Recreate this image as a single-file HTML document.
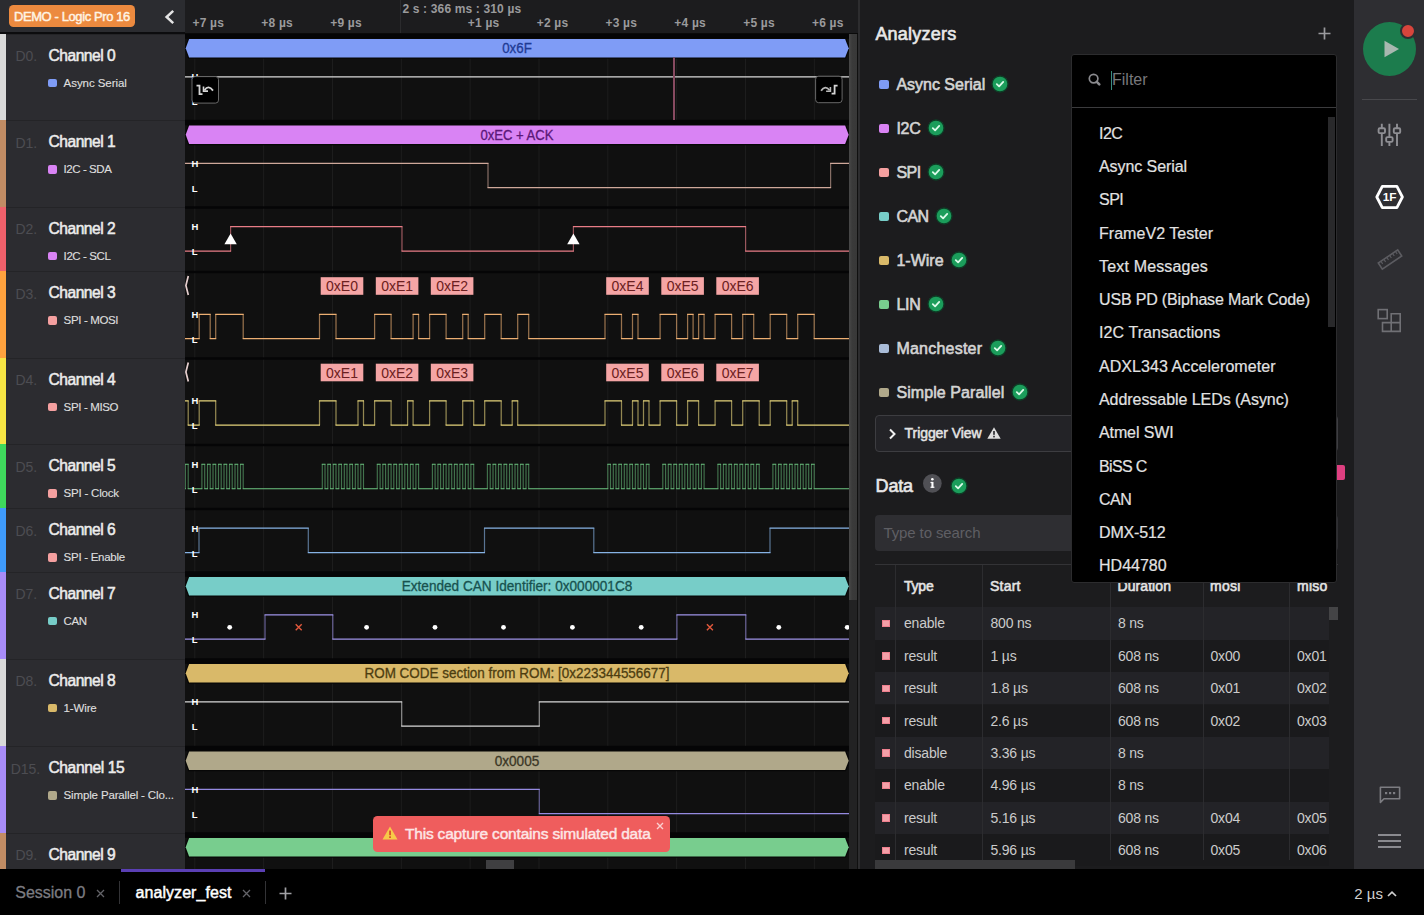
<!DOCTYPE html>
<html><head><meta charset="utf-8"><title>Logic 2</title>
<style>
*{box-sizing:border-box;margin:0;padding:0}
html,body{width:1424px;height:915px;overflow:hidden;background:#000}
body{position:relative;font-family:"Liberation Sans", sans-serif;color:#e0e0e0}
i{display:block;font-style:normal}
#wave{position:absolute;left:185px;top:0;width:675px;height:869px;background:#101010}
#ruler{position:absolute;left:185px;top:0;width:675px;height:32.5px;background:#1c1c1e}
#rline{position:absolute;left:185px;top:32.5px;width:675px;height:2px;background:#0a0a0a}
.rl{position:absolute;top:15.5px;font-size:12px;font-weight:bold;color:#9a9a9c;white-space:nowrap;line-height:15px}
#major{position:absolute;left:399.8px;top:0;width:1px;height:33px;background:#2b2b2d}
#mlabel{position:absolute;left:402.5px;top:0.5px;font-size:12px;font-weight:bold;color:#9a9a9c;white-space:nowrap;line-height:16px}
#vsb{position:absolute;left:848.8px;top:34px;width:8.3px;height:835px;background:#222223}
#vsbt{position:absolute;left:848.8px;top:34px;width:8.3px;height:566px;background:linear-gradient(90deg,#484848,#3a3a3a 40%,#383838)}
#vsb2{position:absolute;left:857.1px;top:34px;width:1px;height:835px;background:#101010}
#left{position:absolute;left:0;top:0;width:185px;height:869px;background:#2c2c30}
#topbar{position:absolute;left:0;top:0;width:185px;height:32.5px;background:#2b2c30}
#topline{position:absolute;left:0;top:32.3px;width:185px;height:1.7px;background:#0c0c0e}
#demo{position:absolute;left:8.7px;top:4.9px;width:126.4px;height:22.5px;border-radius:4.5px;background:#ec8a3f;color:#fff4e4;font-size:13px;line-height:23.5px;text-align:center;white-space:nowrap;-webkit-text-stroke:0.45px}
.ch{position:absolute;left:0;width:185px;margin-top:-0.5px;border-top:1px solid #242427}
.strip{position:absolute;left:0;top:-1px;bottom:0;width:5.8px}
.dn{position:absolute;top:12.6px;font-size:14px;color:#4d4d52;line-height:18px;letter-spacing:0.3px}
.cn{position:absolute;left:48.5px;top:12.4px;font-size:15.6px;-webkit-text-stroke:0.5px;color:#ececec;line-height:18px;white-space:nowrap}
.sq{position:absolute;left:48.2px;top:44.4px;width:8.8px;height:8.4px;border-radius:2px}
.sub{position:absolute;left:63.6px;top:40.2px;font-size:11.5px;-webkit-text-stroke:0.15px;color:#dedede;line-height:16px;white-space:nowrap}
#rp{position:absolute;left:858.1px;top:0;width:495.9px;height:869px;background:#1c1c1e;border-left:2.2px solid #2d2d2f}
#side{position:absolute;left:1354px;top:0;width:70px;height:869px;background:#2e2e32}
h2{position:absolute;font-size:18px;font-weight:normal;-webkit-text-stroke:0.6px;color:#e8e8e8;line-height:22px;white-space:nowrap}
.an{position:absolute;left:879px;height:24px;white-space:nowrap}
.asq{position:absolute;left:0;top:7.7px;width:9.5px;height:9px;border-radius:2px}
.at{position:absolute;left:17.4px;top:0;font-size:16px;-webkit-text-stroke:0.6px;color:#d4d4d4;line-height:24px}
.an .ck{position:relative;top:3.6px}
.an .at{position:relative;left:0;margin-left:17.4px;margin-right:7.8px;display:inline-block;vertical-align:top}
#trig{position:absolute;left:875.4px;top:414.9px;width:463px;height:36.7px;border:1px solid #3d3d41;border-radius:4px;background:#232327}
#dsearch{position:absolute;left:875.4px;top:514.6px;width:463px;height:36.3px;border-radius:4px;background:#2e2e32;color:#5f5f64;font-size:15px;line-height:36px;padding-left:8px}
#dd{position:absolute;left:1070.5px;top:53.7px;width:266.3px;height:529.5px;background:#000;border:1px solid #2c2c2e;border-radius:3px;overflow:hidden}
#ddsep{position:absolute;left:0;top:52.5px;width:100%;height:1.3px;background:#3b3b3d}
.di{position:absolute;left:27.5px;font-size:16px;-webkit-text-stroke:0.2px;color:#e2e2e2;line-height:24px;white-space:nowrap}
#ddsb{position:absolute;left:256.5px;top:62.5px;width:7px;height:210px;background:#29292b}
#tbl{position:absolute;left:875px;top:564.5px;width:463px;height:304.5px;overflow:hidden}
.tr{position:absolute;left:875px;width:454px;height:32.4px;font-size:14px;letter-spacing:-0.2px;color:#cbcbcb;line-height:32.4px;white-space:nowrap}
.tr span{position:absolute;top:0}
.mk{position:absolute;left:7px;top:12.6px;width:7.8px;height:7.4px;background:#f4a0a8;border:1.6px solid #ee7f8e}
.th{position:absolute;top:577px;font-size:14px;-webkit-text-stroke:0.55px;color:#e4e4e4;line-height:18px}
.vl{position:absolute;top:565px;width:1px;height:295px;background:#2c2c2f}
#bottom{position:absolute;left:0;top:869px;width:1424px;height:46px;background:#000}
.tab{position:absolute;top:14px;font-size:16px;line-height:20px;white-space:nowrap}
</style></head><body>
<div id="wave"></div>
<div id="ruler"></div><div id="rline"></div>
<div id="major"></div><span id="mlabel" style="letter-spacing:0.149px">2 s : 366 ms : 310 µs</span>
<span class="rl" id="rl0" style="left:192.5px;letter-spacing:0.198px">+7 µs</span>
<span class="rl" id="rl1" style="left:261.3px;letter-spacing:0.198px">+8 µs</span>
<span class="rl" id="rl2" style="left:330.2px;letter-spacing:0.198px">+9 µs</span>
<span class="rl" id="rl3" style="left:467.8px;letter-spacing:0.198px">+1 µs</span>
<span class="rl" id="rl4" style="left:536.7px;letter-spacing:0.198px">+2 µs</span>
<span class="rl" id="rl5" style="left:605.5px;letter-spacing:0.198px">+3 µs</span>
<span class="rl" id="rl6" style="left:674.3px;letter-spacing:0.198px">+4 µs</span>
<span class="rl" id="rl7" style="left:743.2px;letter-spacing:0.198px">+5 µs</span>
<span class="rl" id="rl8" style="left:812.0px;letter-spacing:0.198px">+6 µs</span>
<svg style="position:absolute;left:0;top:0" width="1424" height="869" viewBox="0 0 1424 869" font-family='"Liberation Sans", sans-serif'><defs><clipPath id="wc"><rect x="185" y="34" width="664" height="835"/></clipPath></defs><g clip-path="url(#wc)"><rect x="194.3" y="34" width="1" height="835" fill="#1d1d1d"/>
<rect x="263.1" y="34" width="1" height="835" fill="#1d1d1d"/>
<rect x="332.0" y="34" width="1" height="835" fill="#1d1d1d"/>
<rect x="400.8" y="34" width="1" height="835" fill="#1d1d1d"/>
<rect x="469.6" y="34" width="1" height="835" fill="#1d1d1d"/>
<rect x="538.5" y="34" width="1" height="835" fill="#1d1d1d"/>
<rect x="607.3" y="34" width="1" height="835" fill="#1d1d1d"/>
<rect x="676.1" y="34" width="1" height="835" fill="#1d1d1d"/>
<rect x="745.0" y="34" width="1" height="835" fill="#1d1d1d"/>
<rect x="813.8" y="34" width="1" height="835" fill="#1d1d1d"/>
<rect x="185" y="33.3" width="664" height="5.5" fill="#050506"/>
<rect x="185" y="119.8" width="664" height="5.5" fill="#050506"/>
<rect x="185" y="206.3" width="664" height="2.4" fill="#050506"/>
<rect x="185" y="270.8" width="664" height="2.4" fill="#050506"/>
<rect x="185" y="357.3" width="664" height="2.4" fill="#050506"/>
<rect x="185" y="443.8" width="664" height="2.4" fill="#050506"/>
<rect x="185" y="507.8" width="664" height="2.4" fill="#050506"/>
<rect x="185" y="571.3" width="664" height="5.5" fill="#050506"/>
<rect x="185" y="658.3" width="664" height="5.5" fill="#050506"/>
<rect x="185" y="745.8" width="664" height="5.5" fill="#050506"/>
<rect x="185" y="832.3" width="664" height="5.5" fill="#050506"/>
<polygon points="185.7,48.25 189.1,39.0 845.1,39.0 848.7,48.25 845.1,57.5 189.1,57.5" fill="#7f9cf6" stroke="#070707" stroke-width="2.4" paint-order="stroke"/><text x="502.2" y="53.1" textLength="29.6" lengthAdjust="spacingAndGlyphs" font-size="14" fill="#1e3a94" stroke="#1e3a94" stroke-width="0.3">0x6F</text>
<polygon points="185.7,134.75 189.1,125.5 845.1,125.5 848.7,134.75 845.1,144.0 189.1,144.0" fill="#d983f4" stroke="#070707" stroke-width="2.4" paint-order="stroke"/><text x="480.4" y="139.7" textLength="73.1" lengthAdjust="spacingAndGlyphs" font-size="14" fill="#5b1878" stroke="#5b1878" stroke-width="0.3">0xEC + ACK</text>
<polygon points="185.7,586.25 189.1,577.0 845.1,577.0 848.7,586.25 845.1,595.5 189.1,595.5" fill="#77cdc8" stroke="#070707" stroke-width="2.4" paint-order="stroke"/><text x="401.7" y="591.1" textLength="230.6" lengthAdjust="spacingAndGlyphs" font-size="14" fill="#17524f" stroke="#17524f" stroke-width="0.3">Extended CAN Identifier: 0x000001C8</text>
<polygon points="185.7,673.25 189.1,664.0 845.1,664.0 848.7,673.25 845.1,682.5 189.1,682.5" fill="#d9b969" stroke="#070707" stroke-width="2.4" paint-order="stroke"/><text x="364.5" y="678.1" textLength="305" lengthAdjust="spacingAndGlyphs" font-size="14" fill="#4d3d10" stroke="#4d3d10" stroke-width="0.3">ROM CODE section from ROM: [0x223344556677]</text>
<polygon points="185.7,760.75 189.1,751.5 845.1,751.5 848.7,760.75 845.1,770.0 189.1,770.0" fill="#b0a88a" stroke="#070707" stroke-width="2.4" paint-order="stroke"/><text x="494.7" y="765.6" textLength="44.6" lengthAdjust="spacingAndGlyphs" font-size="14" fill="#3b3726" stroke="#3b3726" stroke-width="0.3">0x0005</text>
<polygon points="185.7,847.25 189.1,838.0 845.1,838.0 848.7,847.25 845.1,856.5 189.1,856.5" fill="#78cd8e" stroke="#070707" stroke-width="2.4" paint-order="stroke"/>
<path d="M185 76.8H849" fill="none" stroke="#dadada" stroke-width="1.2"/>
<rect x="673" y="57.5" width="2" height="62.5" fill="#874a60"/>
<path d="M184.5 163.3H488.5M487.5 187.7H831.1M830.1 163.3H849.0" fill="none" stroke="#cfa89a" stroke-width="1.2"/><path d="M488.0 163.3V187.7M830.6 163.3V187.7" fill="none" stroke="#cfa89a" stroke-width="1.2" opacity="0.62"/>
<path d="M184.5 251.2H231.1M230.1 226.7H402.5M401.5 251.2H573.9M572.9 226.7H746.1M745.1 251.2H849.0" fill="none" stroke="#e87c86" stroke-width="1.2"/><path d="M230.6 226.7V251.2M402.0 226.7V251.2M573.4 226.7V251.2M745.6 226.7V251.2" fill="none" stroke="#e87c86" stroke-width="1.2" opacity="0.62"/>
<polygon points="230.6,233.5 224.4,244.3 236.79999999999998,244.3" fill="#fff"/>
<polygon points="573.4,233.5 567.1999999999999,244.3 579.6,244.3" fill="#fff"/>
<path d="M184.5 338.7H199.7M198.7 314.3H210.7M209.7 338.7H216.2M215.2 314.3H243.7M242.7 338.7H320.0M319.0 314.3H336.5M335.5 338.7H375.1M374.1 314.3H391.6M390.6 338.7H413.6M412.6 314.3H419.1M418.1 338.7H430.1M429.1 314.3H446.6M445.6 338.7H463.2M462.2 314.3H468.7M467.7 338.7H485.2M484.2 314.3H501.7M500.7 338.7H518.2M517.2 314.3H529.2M528.2 338.7H605.5M604.5 314.3H622.0M621.0 338.7H633.0M632.0 314.3H638.5M637.5 338.7H660.6M659.6 314.3H677.1M676.1 338.7H688.1M687.1 314.3H693.6M692.6 338.7H699.1M698.1 314.3H704.6M703.6 338.7H715.6M714.6 314.3H732.1M731.1 338.7H743.2M742.2 314.3H754.2M753.2 338.7H770.7M769.7 314.3H787.2M786.2 338.7H798.2M797.2 314.3H814.7M813.7 338.7H849.0" fill="none" stroke="#ecae72" stroke-width="1.25"/><path d="M199.2 314.3V338.7M210.2 314.3V338.7M215.7 314.3V338.7M243.2 314.3V338.7M319.5 314.3V338.7M336.0 314.3V338.7M374.6 314.3V338.7M391.1 314.3V338.7M413.1 314.3V338.7M418.6 314.3V338.7M429.6 314.3V338.7M446.1 314.3V338.7M462.7 314.3V338.7M468.2 314.3V338.7M484.7 314.3V338.7M501.2 314.3V338.7M517.7 314.3V338.7M528.7 314.3V338.7M605.0 314.3V338.7M621.5 314.3V338.7M632.5 314.3V338.7M638.0 314.3V338.7M660.1 314.3V338.7M676.6 314.3V338.7M687.6 314.3V338.7M693.1 314.3V338.7M698.6 314.3V338.7M704.1 314.3V338.7M715.1 314.3V338.7M731.6 314.3V338.7M742.7 314.3V338.7M753.7 314.3V338.7M770.2 314.3V338.7M786.7 314.3V338.7M797.7 314.3V338.7M814.2 314.3V338.7" fill="none" stroke="#ecae72" stroke-width="1.25" opacity="0.62"/>
<path d="M184.5 400.8H188.7M187.7 425.2H199.7M198.7 400.8H216.2M215.2 425.2H320.0M319.0 400.8H336.5M335.5 425.2H358.5M357.5 400.8H364.0M363.0 425.2H375.1M374.1 400.8H391.6M390.6 425.2H408.1M407.1 400.8H413.6M412.6 425.2H430.1M429.1 400.8H446.6M445.6 425.2H463.2M462.2 400.8H474.2M473.2 425.2H485.2M484.2 400.8H501.7M500.7 425.2H512.7M511.7 400.8H518.2M517.2 425.2H605.5M604.5 400.8H622.0M621.0 425.2H633.0M632.0 400.8H638.5M637.5 425.2H644.0M643.0 400.8H649.5M648.5 425.2H660.6M659.6 400.8H677.1M676.1 425.2H688.1M687.1 400.8H699.1M698.1 425.2H715.6M714.6 400.8H732.1M731.1 425.2H743.2M742.2 400.8H759.7M758.7 425.2H770.7M769.7 400.8H787.2M786.2 425.2H792.7M791.7 400.8H798.2M797.2 425.2H849.0" fill="none" stroke="#e4d27a" stroke-width="1.25"/><path d="M188.2 400.8V425.2M199.2 400.8V425.2M215.7 400.8V425.2M319.5 400.8V425.2M336.0 400.8V425.2M358.0 400.8V425.2M363.5 400.8V425.2M374.6 400.8V425.2M391.1 400.8V425.2M407.6 400.8V425.2M413.1 400.8V425.2M429.6 400.8V425.2M446.1 400.8V425.2M462.7 400.8V425.2M473.7 400.8V425.2M484.7 400.8V425.2M501.2 400.8V425.2M512.2 400.8V425.2M517.7 400.8V425.2M605.0 400.8V425.2M621.5 400.8V425.2M632.5 400.8V425.2M638.0 400.8V425.2M643.5 400.8V425.2M649.0 400.8V425.2M660.1 400.8V425.2M676.6 400.8V425.2M687.6 400.8V425.2M698.6 400.8V425.2M715.1 400.8V425.2M731.6 400.8V425.2M742.7 400.8V425.2M759.2 400.8V425.2M770.2 400.8V425.2M786.7 400.8V425.2M792.2 400.8V425.2M797.7 400.8V425.2" fill="none" stroke="#e4d27a" stroke-width="1.25" opacity="0.62"/>
<path d="M184.5 488.7H185.9M184.9 464.2H188.7M187.7 488.7H202.4M201.4 464.2H205.2M204.2 488.7H208.0M207.0 464.2H210.7M209.7 488.7H213.5M212.5 464.2H216.2M215.2 488.7H219.0M218.0 464.2H221.7M220.7 488.7H224.5M223.5 464.2H227.2M226.2 488.7H230.0M229.0 464.2H232.7M231.7 488.7H235.5M234.5 464.2H238.2M237.2 488.7H241.0M240.0 464.2H243.7M242.7 488.7H322.8M321.8 464.2H325.5M324.5 488.7H328.3M327.3 464.2H331.0M330.0 488.7H333.8M332.8 464.2H336.5M335.5 488.7H339.3M338.3 464.2H342.0M341.0 488.7H344.8M343.8 464.2H347.5M346.5 488.7H350.3M349.3 464.2H353.0M352.0 488.7H355.8M354.8 464.2H358.5M357.5 488.7H361.3M360.3 464.2H364.0M363.0 488.7H377.8M376.8 464.2H380.6M379.6 488.7H383.3M382.3 464.2H386.1M385.1 488.7H388.8M387.8 464.2H391.6M390.6 488.7H394.3M393.3 464.2H397.1M396.1 488.7H399.8M398.8 464.2H402.6M401.6 488.7H405.3M404.3 464.2H408.1M407.1 488.7H410.9M409.9 464.2H413.6M412.6 488.7H416.4M415.4 464.2H419.1M418.1 488.7H432.9M431.9 464.2H435.6M434.6 488.7H438.4M437.4 464.2H441.1M440.1 488.7H443.9M442.9 464.2H446.6M445.6 488.7H449.4M448.4 464.2H452.2M451.2 488.7H454.9M453.9 464.2H457.7M456.7 488.7H460.4M459.4 464.2H463.2M462.2 488.7H465.9M464.9 464.2H468.7M467.7 488.7H471.4M470.4 464.2H474.2M473.2 488.7H487.9M486.9 464.2H490.7M489.7 488.7H493.5M492.5 464.2H496.2M495.2 488.7H499.0M498.0 464.2H501.7M500.7 488.7H504.5M503.5 464.2H507.2M506.2 488.7H510.0M509.0 464.2H512.7M511.7 488.7H515.5M514.5 464.2H518.2M517.2 488.7H521.0M520.0 464.2H523.7M522.7 488.7H526.5M525.5 464.2H529.2M528.2 488.7H608.3M607.3 464.2H611.0M610.0 488.7H613.8M612.8 464.2H616.5M615.5 488.7H619.3M618.3 464.2H622.0M621.0 488.7H624.8M623.8 464.2H627.5M626.5 488.7H630.3M629.3 464.2H633.0M632.0 488.7H635.8M634.8 464.2H638.5M637.5 488.7H641.3M640.3 464.2H644.0M643.0 488.7H646.8M645.8 464.2H649.5M648.5 488.7H663.3M662.3 464.2H666.1M665.1 488.7H668.8M667.8 464.2H671.6M670.6 488.7H674.3M673.3 464.2H677.1M676.1 488.7H679.8M678.8 464.2H682.6M681.6 488.7H685.3M684.3 464.2H688.1M687.1 488.7H690.8M689.8 464.2H693.6M692.6 488.7H696.4M695.4 464.2H699.1M698.1 488.7H701.9M700.9 464.2H704.6M703.6 488.7H718.4M717.4 464.2H721.1M720.1 488.7H723.9M722.9 464.2H726.6M725.6 488.7H729.4M728.4 464.2H732.1M731.1 488.7H734.9M733.9 464.2H737.7M736.7 488.7H740.4M739.4 464.2H743.2M742.2 488.7H745.9M744.9 464.2H748.7M747.7 488.7H751.4M750.4 464.2H754.2M753.2 488.7H756.9M755.9 464.2H759.7M758.7 488.7H773.4M772.4 464.2H776.2M775.2 488.7H779.0M778.0 464.2H781.7M780.7 488.7H784.5M783.5 464.2H787.2M786.2 488.7H790.0M789.0 464.2H792.7M791.7 488.7H795.5M794.5 464.2H798.2M797.2 488.7H801.0M800.0 464.2H803.7M802.7 488.7H806.5M805.5 464.2H809.2M808.2 488.7H812.0M811.0 464.2H814.7M813.7 488.7H849.0" fill="none" stroke="#6cc480" stroke-width="1.15"/><path d="M185.4 464.2V488.7M188.2 464.2V488.7M201.9 464.2V488.7M204.7 464.2V488.7M207.5 464.2V488.7M210.2 464.2V488.7M213.0 464.2V488.7M215.7 464.2V488.7M218.5 464.2V488.7M221.2 464.2V488.7M224.0 464.2V488.7M226.7 464.2V488.7M229.5 464.2V488.7M232.2 464.2V488.7M235.0 464.2V488.7M237.7 464.2V488.7M240.5 464.2V488.7M243.2 464.2V488.7M322.3 464.2V488.7M325.0 464.2V488.7M327.8 464.2V488.7M330.5 464.2V488.7M333.3 464.2V488.7M336.0 464.2V488.7M338.8 464.2V488.7M341.5 464.2V488.7M344.3 464.2V488.7M347.0 464.2V488.7M349.8 464.2V488.7M352.5 464.2V488.7M355.3 464.2V488.7M358.0 464.2V488.7M360.8 464.2V488.7M363.5 464.2V488.7M377.3 464.2V488.7M380.1 464.2V488.7M382.8 464.2V488.7M385.6 464.2V488.7M388.3 464.2V488.7M391.1 464.2V488.7M393.8 464.2V488.7M396.6 464.2V488.7M399.3 464.2V488.7M402.1 464.2V488.7M404.8 464.2V488.7M407.6 464.2V488.7M410.4 464.2V488.7M413.1 464.2V488.7M415.9 464.2V488.7M418.6 464.2V488.7M432.4 464.2V488.7M435.1 464.2V488.7M437.9 464.2V488.7M440.6 464.2V488.7M443.4 464.2V488.7M446.1 464.2V488.7M448.9 464.2V488.7M451.7 464.2V488.7M454.4 464.2V488.7M457.2 464.2V488.7M459.9 464.2V488.7M462.7 464.2V488.7M465.4 464.2V488.7M468.2 464.2V488.7M470.9 464.2V488.7M473.7 464.2V488.7M487.4 464.2V488.7M490.2 464.2V488.7M493.0 464.2V488.7M495.7 464.2V488.7M498.5 464.2V488.7M501.2 464.2V488.7M504.0 464.2V488.7M506.7 464.2V488.7M509.5 464.2V488.7M512.2 464.2V488.7M515.0 464.2V488.7M517.7 464.2V488.7M520.5 464.2V488.7M523.2 464.2V488.7M526.0 464.2V488.7M528.7 464.2V488.7M607.8 464.2V488.7M610.5 464.2V488.7M613.3 464.2V488.7M616.0 464.2V488.7M618.8 464.2V488.7M621.5 464.2V488.7M624.3 464.2V488.7M627.0 464.2V488.7M629.8 464.2V488.7M632.5 464.2V488.7M635.3 464.2V488.7M638.0 464.2V488.7M640.8 464.2V488.7M643.5 464.2V488.7M646.3 464.2V488.7M649.0 464.2V488.7M662.8 464.2V488.7M665.6 464.2V488.7M668.3 464.2V488.7M671.1 464.2V488.7M673.8 464.2V488.7M676.6 464.2V488.7M679.3 464.2V488.7M682.1 464.2V488.7M684.8 464.2V488.7M687.6 464.2V488.7M690.3 464.2V488.7M693.1 464.2V488.7M695.9 464.2V488.7M698.6 464.2V488.7M701.4 464.2V488.7M704.1 464.2V488.7M717.9 464.2V488.7M720.6 464.2V488.7M723.4 464.2V488.7M726.1 464.2V488.7M728.9 464.2V488.7M731.6 464.2V488.7M734.4 464.2V488.7M737.2 464.2V488.7M739.9 464.2V488.7M742.7 464.2V488.7M745.4 464.2V488.7M748.2 464.2V488.7M750.9 464.2V488.7M753.7 464.2V488.7M756.4 464.2V488.7M759.2 464.2V488.7M772.9 464.2V488.7M775.7 464.2V488.7M778.5 464.2V488.7M781.2 464.2V488.7M784.0 464.2V488.7M786.7 464.2V488.7M789.5 464.2V488.7M792.2 464.2V488.7M795.0 464.2V488.7M797.7 464.2V488.7M800.5 464.2V488.7M803.2 464.2V488.7M806.0 464.2V488.7M808.7 464.2V488.7M811.5 464.2V488.7M814.2 464.2V488.7" fill="none" stroke="#6cc480" stroke-width="1.15" opacity="0.55"/>
<path d="M184.5 552.7H199.5M198.5 528.2H308.8M307.8 552.7H485.0M484.0 528.2H594.3M593.3 552.7H770.5M769.5 528.2H849.0" fill="none" stroke="#86b2e4" stroke-width="1.2"/><path d="M199.0 528.2V552.7M308.3 528.2V552.7M484.5 528.2V552.7M593.8 528.2V552.7M770.0 528.2V552.7" fill="none" stroke="#86b2e4" stroke-width="1.2" opacity="0.62"/>
<rect x="320.7" y="277.2" width="42.6" height="17.6" fill="#f5a5a5"/><text x="342.0" y="291.1" text-anchor="middle" font-size="14" fill="#6b2020">0xE0</text>
<rect x="320.7" y="363.7" width="42.6" height="17.6" fill="#f5a5a5"/><text x="342.0" y="377.6" text-anchor="middle" font-size="14" fill="#6b2020">0xE1</text>
<rect x="375.8" y="277.2" width="42.6" height="17.6" fill="#f5a5a5"/><text x="397.1" y="291.1" text-anchor="middle" font-size="14" fill="#6b2020">0xE1</text>
<rect x="375.8" y="363.7" width="42.6" height="17.6" fill="#f5a5a5"/><text x="397.1" y="377.6" text-anchor="middle" font-size="14" fill="#6b2020">0xE2</text>
<rect x="430.8" y="277.2" width="42.6" height="17.6" fill="#f5a5a5"/><text x="452.1" y="291.1" text-anchor="middle" font-size="14" fill="#6b2020">0xE2</text>
<rect x="430.8" y="363.7" width="42.6" height="17.6" fill="#f5a5a5"/><text x="452.1" y="377.6" text-anchor="middle" font-size="14" fill="#6b2020">0xE3</text>
<rect x="606.2" y="277.2" width="42.6" height="17.6" fill="#f5a5a5"/><text x="627.5" y="291.1" text-anchor="middle" font-size="14" fill="#6b2020">0xE4</text>
<rect x="606.2" y="363.7" width="42.6" height="17.6" fill="#f5a5a5"/><text x="627.5" y="377.6" text-anchor="middle" font-size="14" fill="#6b2020">0xE5</text>
<rect x="661.3" y="277.2" width="42.6" height="17.6" fill="#f5a5a5"/><text x="682.6" y="291.1" text-anchor="middle" font-size="14" fill="#6b2020">0xE5</text>
<rect x="661.3" y="363.7" width="42.6" height="17.6" fill="#f5a5a5"/><text x="682.6" y="377.6" text-anchor="middle" font-size="14" fill="#6b2020">0xE6</text>
<rect x="716.3" y="277.2" width="42.6" height="17.6" fill="#f5a5a5"/><text x="737.6" y="291.1" text-anchor="middle" font-size="14" fill="#6b2020">0xE6</text>
<rect x="716.3" y="363.7" width="42.6" height="17.6" fill="#f5a5a5"/><text x="737.6" y="377.6" text-anchor="middle" font-size="14" fill="#6b2020">0xE7</text>
<path d="M188.3 276.0L185.9 285.5L188.3 295.0" fill="none" stroke="#e6cfcf" stroke-width="1.7"/>
<path d="M188.3 362.5L185.9 372L188.3 381.5" fill="none" stroke="#e6cfcf" stroke-width="1.7"/>
<path d="M184.5 639.2H265.5M264.5 614.8H333.3M332.3 639.2H677.4M676.4 614.8H746.3M745.3 639.2H849.0" fill="none" stroke="#9d92e6" stroke-width="1.2"/><path d="M265.0 614.8V639.2M332.8 614.8V639.2M676.9 614.8V639.2M745.8 614.8V639.2" fill="none" stroke="#9d92e6" stroke-width="1.2" opacity="0.62"/>
<circle cx="229.7" cy="627.3" r="2.4" fill="#fff"/>
<path d="M295.7 624.3l6 6m0 -6l-6 6" stroke="#e0583c" stroke-width="1.4" fill="none"/>
<circle cx="366.6" cy="627.3" r="2.4" fill="#fff"/>
<circle cx="435.0" cy="627.3" r="2.4" fill="#fff"/>
<circle cx="503.5" cy="627.3" r="2.4" fill="#fff"/>
<circle cx="572.4" cy="627.3" r="2.4" fill="#fff"/>
<circle cx="641.2" cy="627.3" r="2.4" fill="#fff"/>
<path d="M706.9 624.3l6 6m0 -6l-6 6" stroke="#e0583c" stroke-width="1.4" fill="none"/>
<circle cx="778.8" cy="627.3" r="2.4" fill="#fff"/>
<circle cx="847.2" cy="627.3" r="2.4" fill="#fff"/>
<path d="M184.5 701.8H402.2M401.2 726.2H539.8M538.8 701.8H849.0" fill="none" stroke="#d8d8d8" stroke-width="1.2"/><path d="M401.7 701.8V726.2M539.3 701.8V726.2" fill="none" stroke="#d8d8d8" stroke-width="1.2" opacity="0.62"/>
<path d="M184.5 789.3H539.8M538.8 813.7H849.0" fill="none" stroke="#958ae0" stroke-width="1.2"/><path d="M539.3 789.3V813.7" fill="none" stroke="#958ae0" stroke-width="1.2" opacity="0.62"/>
<text x="191.4" y="80.2" font-size="9.5" font-weight="bold" fill="#fff">H</text>
<text x="191.8" y="105.4" font-size="9.5" font-weight="bold" fill="#fff">L</text>
<text x="191.4" y="166.7" font-size="9.5" font-weight="bold" fill="#fff">H</text>
<text x="191.8" y="191.9" font-size="9.5" font-weight="bold" fill="#fff">L</text>
<text x="191.4" y="230.1" font-size="9.5" font-weight="bold" fill="#fff">H</text>
<text x="191.8" y="255.4" font-size="9.5" font-weight="bold" fill="#fff">L</text>
<text x="191.4" y="317.7" font-size="9.5" font-weight="bold" fill="#fff">H</text>
<text x="191.8" y="342.9" font-size="9.5" font-weight="bold" fill="#fff">L</text>
<text x="191.4" y="404.2" font-size="9.5" font-weight="bold" fill="#fff">H</text>
<text x="191.8" y="429.4" font-size="9.5" font-weight="bold" fill="#fff">L</text>
<text x="191.4" y="467.6" font-size="9.5" font-weight="bold" fill="#fff">H</text>
<text x="191.8" y="492.9" font-size="9.5" font-weight="bold" fill="#fff">L</text>
<text x="191.4" y="531.6" font-size="9.5" font-weight="bold" fill="#fff">H</text>
<text x="191.8" y="556.9" font-size="9.5" font-weight="bold" fill="#fff">L</text>
<text x="191.4" y="618.2" font-size="9.5" font-weight="bold" fill="#fff">H</text>
<text x="191.8" y="643.4" font-size="9.5" font-weight="bold" fill="#fff">L</text>
<text x="191.4" y="705.2" font-size="9.5" font-weight="bold" fill="#fff">H</text>
<text x="191.8" y="730.4" font-size="9.5" font-weight="bold" fill="#fff">L</text>
<text x="191.4" y="792.7" font-size="9.5" font-weight="bold" fill="#fff">H</text>
<text x="191.8" y="817.9" font-size="9.5" font-weight="bold" fill="#fff">L</text>
<rect x="192" y="76.6" width="26.5" height="26.5" rx="3" fill="#000" stroke="#686868" stroke-width="1"/><path d="M196.5 85.6h3v8.5h3" fill="none" stroke="#d4d4d4" stroke-width="1.8"/><path d="M204.5 90.1q4 -5.5 8.5 0.5" fill="none" stroke="#d4d4d4" stroke-width="1.8"/><path d="M203.5 86.6v4.5h4.5" fill="none" stroke="#d4d4d4" stroke-width="1.6"/>
<rect x="815.6" y="76.2" width="26.5" height="26.5" rx="3" fill="#000" stroke="#686868" stroke-width="1"/><path d="M821.1 90.7q4 -6 8.5 -0.5" fill="none" stroke="#b8b8b8" stroke-width="1.8"/><path d="M826.1 91.2h4.3v-4.3" fill="none" stroke="#b8b8b8" stroke-width="1.6"/><path d="M831.6 93.7h3v-8h3" fill="none" stroke="#d4d4d4" stroke-width="1.8"/></g></svg>
<div id="vsb"></div><div id="vsbt"></div><div id="vsb2"></div>
<div style="position:absolute;left:485.5px;top:860px;width:28.5px;height:8.5px;background:#3f3f41"></div>

<div id="left">
<div class="ch" style="top:34px;height:86.5px"><i class="strip" style="background:#d9d9d9"></i><span class="dn" id="dn0" style="left:15.6px;letter-spacing:-0.163px">D0.</span><span class="cn" id="cn0" style="letter-spacing:-0.489px">Channel 0</span><i class="sq" style="background:#7f9cf6"></i><span class="sub" id="sub0" style="letter-spacing:-0.060px">Async Serial</span></div>
<div class="ch" style="top:120.5px;height:86.5px"><i class="strip" style="background:#c18c64"></i><span class="dn" id="dn1" style="left:15.6px;letter-spacing:-0.163px">D1.</span><span class="cn" id="cn1" style="letter-spacing:-0.489px">Channel 1</span><i class="sq" style="background:#d983f4"></i><span class="sub" id="sub1" style="letter-spacing:-0.441px">I2C - SDA</span></div>
<div class="ch" style="top:207px;height:64.5px"><i class="strip" style="background:#f0606b"></i><span class="dn" id="dn2" style="left:15.6px;letter-spacing:-0.163px">D2.</span><span class="cn" id="cn2" style="letter-spacing:-0.489px">Channel 2</span><i class="sq" style="background:#d983f4"></i><span class="sub" id="sub2" style="letter-spacing:-0.411px">I2C - SCL</span></div>
<div class="ch" style="top:271.5px;height:86.5px"><i class="strip" style="background:#ffa23e"></i><span class="dn" id="dn3" style="left:15.6px;letter-spacing:-0.163px">D3.</span><span class="cn" id="cn3" style="letter-spacing:-0.489px">Channel 3</span><i class="sq" style="background:#f5a0a0"></i><span class="sub" id="sub3" style="letter-spacing:-0.355px">SPI - MOSI</span></div>
<div class="ch" style="top:358px;height:86.5px"><i class="strip" style="background:#f6e544"></i><span class="dn" id="dn4" style="left:15.6px;letter-spacing:-0.163px">D4.</span><span class="cn" id="cn4" style="letter-spacing:-0.489px">Channel 4</span><i class="sq" style="background:#f5a0a0"></i><span class="sub" id="sub4" style="letter-spacing:-0.355px">SPI - MISO</span></div>
<div class="ch" style="top:444.5px;height:64.0px"><i class="strip" style="background:#3fd95c"></i><span class="dn" id="dn5" style="left:15.6px;letter-spacing:-0.163px">D5.</span><span class="cn" id="cn5" style="letter-spacing:-0.489px">Channel 5</span><i class="sq" style="background:#f5a0a0"></i><span class="sub" id="sub5" style="letter-spacing:-0.211px">SPI - Clock</span></div>
<div class="ch" style="top:508.5px;height:63.5px"><i class="strip" style="background:#3f9bfb"></i><span class="dn" id="dn6" style="left:15.6px;letter-spacing:-0.163px">D6.</span><span class="cn" id="cn6" style="letter-spacing:-0.489px">Channel 6</span><i class="sq" style="background:#f5a0a0"></i><span class="sub" id="sub6" style="letter-spacing:-0.273px">SPI - Enable</span></div>
<div class="ch" style="top:572px;height:87px"><i class="strip" style="background:#a88cf8"></i><span class="dn" id="dn7" style="left:15.6px;letter-spacing:-0.163px">D7.</span><span class="cn" id="cn7" style="letter-spacing:-0.489px">Channel 7</span><i class="sq" style="background:#77cdc8"></i><span class="sub" id="sub7" style="letter-spacing:-0.363px">CAN</span></div>
<div class="ch" style="top:659px;height:87.5px"><i class="strip" style="background:#d9d9d9"></i><span class="dn" id="dn8" style="left:15.6px;letter-spacing:-0.163px">D8.</span><span class="cn" id="cn8" style="letter-spacing:-0.489px">Channel 8</span><i class="sq" style="background:#d9b969"></i><span class="sub" id="sub8" style="letter-spacing:-0.144px">1-Wire</span></div>
<div class="ch" style="top:746.5px;height:86.5px"><i class="strip" style="background:#a88cf8"></i><span class="dn" id="dn9" style="left:10.8px;letter-spacing:-0.071px">D15.</span><span class="cn" id="cn9" style="letter-spacing:-0.407px">Channel 15</span><i class="sq" style="background:#b0a88a"></i><span class="sub" id="sub9" style="letter-spacing:-0.149px">Simple Parallel - Clo...</span></div>
<div class="ch" style="top:833px;height:36px"><i class="strip" style="background:#c18c64"></i><span class="dn" id="dn10" style="left:15.6px;letter-spacing:-0.163px">D9.</span><span class="cn" id="cn10" style="letter-spacing:-0.489px">Channel 9</span></div>
<div id="topbar"></div><div id="topline"></div>
<div id="demo"><span id="demot" style="letter-spacing:-0.398px">DEMO - Logic Pro 16</span></div>
<svg style="position:absolute;left:163px;top:9px" width="14" height="16" viewBox="0 0 14 16"><path d="M10.2 1.8L3.6 8L10.2 14.2" fill="none" stroke="#e4e4e4" stroke-width="2.5"/></svg>
</div>

<div id="toast" style="position:absolute;left:372.7px;top:815.8px;width:297.3px;height:36.5px;border-radius:4.5px;background:#ef5d5d">
<svg style="position:absolute;left:9px;top:10.5px" width="16" height="14" viewBox="0 0 16 14"><path d="M8 0.6L15.5 13.6H0.5Z" fill="#f7c948"/><rect x="7.2" y="4.6" width="1.7" height="4.6" fill="#d9482b"/><rect x="7.2" y="10.3" width="1.7" height="1.7" fill="#d9482b"/></svg>
<span id="toasttxt" style="position:absolute;left:32.3px;top:8px;font-size:15.5px;-webkit-text-stroke:0.45px;color:#fde6e6;line-height:20px;white-space:nowrap;letter-spacing:-0.190px">This capture contains simulated data</span>
<svg style="position:absolute;left:283px;top:6.3px" width="8" height="8" viewBox="0 0 8 8"><path d="M1 1L7 7M7 1L1 7" stroke="#fbd0d0" stroke-width="1.4"/></svg>
</div>

<div id="rp"></div>
<h2 style="left:875.4px;top:22.8px;letter-spacing:0.217px" id="hA">Analyzers</h2>
<svg style="position:absolute;left:1318px;top:27px" width="13" height="13" viewBox="0 0 13 13"><path d="M6.5 0.5V12.5M0.5 6.5H12.5" stroke="#9a9a9e" stroke-width="1.7"/></svg>
<div class="an" style="top:72.8px"><i class="asq" style="background:#7f9cf6"></i><span class="at" id="at0" style="letter-spacing:-0.011px">Async Serial</span><svg class="ck" width="18" height="18" viewBox="-1.5 -1.5 18 18" style="margin:-1.5px"><circle cx="7.5" cy="7.5" r="8" fill="#1b9d5b" stroke="#0e3d26" stroke-width="1.3"/><path d="M4.3 7.7l2.3 2.2l4.1-4.5" fill="none" stroke="#dcfbea" stroke-width="1.8" stroke-linecap="round" stroke-linejoin="round"/></svg></div>
<div class="an" style="top:116.8px"><i class="asq" style="background:#d983f4"></i><span class="at" id="at1" style="letter-spacing:-0.237px">I2C</span><svg class="ck" width="18" height="18" viewBox="-1.5 -1.5 18 18" style="margin:-1.5px"><circle cx="7.5" cy="7.5" r="8" fill="#1b9d5b" stroke="#0e3d26" stroke-width="1.3"/><path d="M4.3 7.7l2.3 2.2l4.1-4.5" fill="none" stroke="#dcfbea" stroke-width="1.8" stroke-linecap="round" stroke-linejoin="round"/></svg></div>
<div class="an" style="top:160.8px"><i class="asq" style="background:#f5a0a0"></i><span class="at" id="at2" style="letter-spacing:-0.534px">SPI</span><svg class="ck" width="18" height="18" viewBox="-1.5 -1.5 18 18" style="margin:-1.5px"><circle cx="7.5" cy="7.5" r="8" fill="#1b9d5b" stroke="#0e3d26" stroke-width="1.3"/><path d="M4.3 7.7l2.3 2.2l4.1-4.5" fill="none" stroke="#dcfbea" stroke-width="1.8" stroke-linecap="round" stroke-linejoin="round"/></svg></div>
<div class="an" style="top:204.8px"><i class="asq" style="background:#77cdc8"></i><span class="at" id="at3" style="letter-spacing:-0.497px">CAN</span><svg class="ck" width="18" height="18" viewBox="-1.5 -1.5 18 18" style="margin:-1.5px"><circle cx="7.5" cy="7.5" r="8" fill="#1b9d5b" stroke="#0e3d26" stroke-width="1.3"/><path d="M4.3 7.7l2.3 2.2l4.1-4.5" fill="none" stroke="#dcfbea" stroke-width="1.8" stroke-linecap="round" stroke-linejoin="round"/></svg></div>
<div class="an" style="top:248.8px"><i class="asq" style="background:#d9b969"></i><span class="at" id="at4" style="letter-spacing:0.013px">1-Wire</span><svg class="ck" width="18" height="18" viewBox="-1.5 -1.5 18 18" style="margin:-1.5px"><circle cx="7.5" cy="7.5" r="8" fill="#1b9d5b" stroke="#0e3d26" stroke-width="1.3"/><path d="M4.3 7.7l2.3 2.2l4.1-4.5" fill="none" stroke="#dcfbea" stroke-width="1.8" stroke-linecap="round" stroke-linejoin="round"/></svg></div>
<div class="an" style="top:292.8px"><i class="asq" style="background:#78cd8e"></i><span class="at" id="at5" style="letter-spacing:-0.237px">LIN</span><svg class="ck" width="18" height="18" viewBox="-1.5 -1.5 18 18" style="margin:-1.5px"><circle cx="7.5" cy="7.5" r="8" fill="#1b9d5b" stroke="#0e3d26" stroke-width="1.3"/><path d="M4.3 7.7l2.3 2.2l4.1-4.5" fill="none" stroke="#dcfbea" stroke-width="1.8" stroke-linecap="round" stroke-linejoin="round"/></svg></div>
<div class="an" style="top:336.8px"><i class="asq" style="background:#a9bcd8"></i><span class="at" id="at6" style="letter-spacing:0.230px">Manchester</span><svg class="ck" width="18" height="18" viewBox="-1.5 -1.5 18 18" style="margin:-1.5px"><circle cx="7.5" cy="7.5" r="8" fill="#1b9d5b" stroke="#0e3d26" stroke-width="1.3"/><path d="M4.3 7.7l2.3 2.2l4.1-4.5" fill="none" stroke="#dcfbea" stroke-width="1.8" stroke-linecap="round" stroke-linejoin="round"/></svg></div>
<div class="an" style="top:380.8px"><i class="asq" style="background:#b0a88a"></i><span class="at" id="at7" style="letter-spacing:0.085px">Simple Parallel</span><svg class="ck" width="18" height="18" viewBox="-1.5 -1.5 18 18" style="margin:-1.5px"><circle cx="7.5" cy="7.5" r="8" fill="#1b9d5b" stroke="#0e3d26" stroke-width="1.3"/><path d="M4.3 7.7l2.3 2.2l4.1-4.5" fill="none" stroke="#dcfbea" stroke-width="1.8" stroke-linecap="round" stroke-linejoin="round"/></svg></div>
<div id="trig">
<svg style="position:absolute;left:11.5px;top:12px" width="9" height="12" viewBox="0 0 9 12"><path d="M2 1.5L6.5 6L2 10.5" fill="none" stroke="#f0f0f0" stroke-width="2"/></svg>
<span id="tv" style="position:absolute;left:28.2px;top:8.2px;font-size:14px;-webkit-text-stroke:0.5px;color:#e4e4e4;line-height:18px;white-space:nowrap;letter-spacing:-0.068px">Trigger View</span>
<svg style="position:absolute;left:110.5px;top:11.3px" width="14" height="12" viewBox="0 0 14 12"><path d="M7 0.3L13.7 11.7H0.3Z" fill="#dedede"/><rect x="6.2" y="4" width="1.6" height="3.8" fill="#232327"/><rect x="6.2" y="8.8" width="1.6" height="1.6" fill="#232327"/></svg>
</div>
<h2 style="left:875.6px;top:475px;letter-spacing:-0.182px" id="hD">Data</h2>
<svg style="position:absolute;left:923px;top:474.2px" width="18.7" height="18.7" viewBox="0 0 18 18"><circle cx="9" cy="9" r="9" fill="#505055"/><rect x="8.1" y="7.6" width="2" height="5.6" fill="#fff"/><rect x="7.2" y="7.6" width="2" height="1.2" fill="#fff"/><rect x="7.2" y="12.2" width="3.8" height="1.1" fill="#fff"/><circle cx="9" cy="5.1" r="1.25" fill="#fff"/></svg>
<div style="position:absolute;left:951px;top:478px"><svg  width="18" height="18" viewBox="-1.5 -1.5 18 18" style="margin:-1.5px"><circle cx="7.5" cy="7.5" r="8" fill="#1b9d5b" stroke="#0e3d26" stroke-width="1.3"/><path d="M4.3 7.7l2.3 2.2l4.1-4.5" fill="none" stroke="#dcfbea" stroke-width="1.8" stroke-linecap="round" stroke-linejoin="round"/></svg></div>
<div id="dsearch"><span id="dst" style="letter-spacing:-0.100px">Type to search</span></div>
<div style="position:absolute;left:1337px;top:465px;width:8px;height:15px;background:#de3f80;border-radius:0 2px 2px 0"></div>

<div style="position:absolute;left:875px;top:564.3px;width:463px;height:1px;background:#333336"></div>
<div style="position:absolute;left:875px;top:606.8px;width:463px;height:1px;background:#333336"></div>
<div class="tr" style="top:607.3px;background:#232327"><i class="mk"></i><span style="left:29px">enable</span><span style="left:115.5px">800 ns</span><span style="left:243px">8 ns</span><span style="left:335.5px"></span><span style="left:422px"></span></div>
<div class="tr" style="top:639.7px;background:#1a1a1c"><i class="mk"></i><span style="left:29px">result</span><span style="left:115.5px">1 µs</span><span style="left:243px">608 ns</span><span style="left:335.5px">0x00</span><span style="left:422px">0x01</span></div>
<div class="tr" style="top:672.1px;background:#232327"><i class="mk"></i><span style="left:29px">result</span><span style="left:115.5px">1.8 µs</span><span style="left:243px">608 ns</span><span style="left:335.5px">0x01</span><span style="left:422px">0x02</span></div>
<div class="tr" style="top:704.5px;background:#1a1a1c"><i class="mk"></i><span style="left:29px">result</span><span style="left:115.5px">2.6 µs</span><span style="left:243px">608 ns</span><span style="left:335.5px">0x02</span><span style="left:422px">0x03</span></div>
<div class="tr" style="top:736.9px;background:#232327"><i class="mk"></i><span style="left:29px">disable</span><span style="left:115.5px">3.36 µs</span><span style="left:243px">8 ns</span><span style="left:335.5px"></span><span style="left:422px"></span></div>
<div class="tr" style="top:769.3px;background:#1a1a1c"><i class="mk"></i><span style="left:29px">enable</span><span style="left:115.5px">4.96 µs</span><span style="left:243px">8 ns</span><span style="left:335.5px"></span><span style="left:422px"></span></div>
<div class="tr" style="top:801.7px;background:#232327"><i class="mk"></i><span style="left:29px">result</span><span style="left:115.5px">5.16 µs</span><span style="left:243px">608 ns</span><span style="left:335.5px">0x04</span><span style="left:422px">0x05</span></div>
<div class="tr" style="top:834.1px;background:#1a1a1c"><i class="mk"></i><span style="left:29px">result</span><span style="left:115.5px">5.96 µs</span><span style="left:243px">608 ns</span><span style="left:335.5px">0x05</span><span style="left:422px">0x06</span></div>
<span class="th" id="th0" style="left:904px;letter-spacing:-0.215px">Type</span><span class="th" id="th1" style="left:990px;letter-spacing:0.227px">Start</span><span class="th" id="th2" style="left:1117.5px;letter-spacing:0.072px">Duration</span><span class="th" id="th3" style="left:1210px;letter-spacing:0.234px">mosi</span><span class="th" id="th4" style="left:1297px;letter-spacing:0.234px">miso</span>
<i class="vl" style="left:895px"></i><i class="vl" style="left:982px"></i><i class="vl" style="left:1110px"></i><i class="vl" style="left:1202.8px"></i><i class="vl" style="left:1289.3px"></i>
<div style="position:absolute;left:1329.3px;top:607px;width:8.7px;height:262px;background:#1c1c1e"></div>
<div style="position:absolute;left:1329.3px;top:607.3px;width:8.7px;height:13px;background:#444446"></div>
<div style="position:absolute;left:875px;top:860.3px;width:200px;height:8.7px;background:#3a3a3c"></div>

<div id="dd">
<svg style="position:absolute;left:16.5px;top:18.5px" width="14" height="14" viewBox="0 0 14 14"><circle cx="5.6" cy="5.6" r="4.3" fill="none" stroke="#8a8a8e" stroke-width="1.7"/><path d="M8.8 8.8L11.3 11.3" stroke="#8a8a8e" stroke-width="2.6" stroke-linecap="round"/></svg>
<div style="position:absolute;left:39.5px;top:16.3px;width:1.3px;height:18.6px;background:#3c8c7c"></div>
<span style="position:absolute;left:40.5px;top:13.5px;font-size:16px;color:#78787c;line-height:24px">Filter</span>
<div id="ddsep"></div>
<div class="di" id="di0" style="top:67.2px;letter-spacing:-0.501px">I2C</div>
<div class="di" id="di1" style="top:100.5px;letter-spacing:-0.077px">Async Serial</div>
<div class="di" id="di2" style="top:133.7px;letter-spacing:-0.534px">SPI</div>
<div class="di" id="di3" style="top:167.0px;letter-spacing:0.040px">FrameV2 Tester</div>
<div class="di" id="di4" style="top:200.3px;letter-spacing:0.168px">Text Messages</div>
<div class="di" id="di5" style="top:233.6px;letter-spacing:-0.165px">USB PD (Biphase Mark Code)</div>
<div class="di" id="di6" style="top:266.8px;letter-spacing:0.084px">I2C Transactions</div>
<div class="di" id="di7" style="top:300.1px;letter-spacing:0.066px">ADXL343 Accelerometer</div>
<div class="di" id="di8" style="top:333.4px;letter-spacing:-0.054px">Addressable LEDs (Async)</div>
<div class="di" id="di9" style="top:366.6px;letter-spacing:-0.108px">Atmel SWI</div>
<div class="di" id="di10" style="top:399.9px;letter-spacing:-0.664px">BiSS C</div>
<div class="di" id="di11" style="top:433.2px;letter-spacing:-0.497px">CAN</div>
<div class="di" id="di12" style="top:466.4px;letter-spacing:-0.156px">DMX-512</div>
<div class="di" id="di13" style="top:499.7px;letter-spacing:0.013px">HD44780</div>
<div id="ddsb"></div>
</div>

<div id="side">
<div style="position:absolute;left:9.2px;top:21.8px;width:53px;height:54px;border-radius:50%;background:#1c7c4d"></div>
<svg style="position:absolute;left:30px;top:40px" width="16" height="18" viewBox="0 0 16 18"><path d="M0.5 0.8L15 9L0.5 17.2Z" fill="#a8b8b0"/></svg>
<div style="position:absolute;left:46px;top:23px;width:16px;height:16px;border-radius:50%;background:#d8453c;border:2px solid #2e2e32"></div>
<div style="position:absolute;left:8px;top:99px;width:54.5px;height:1.2px;background:#48484c"></div>
<svg style="position:absolute;left:22px;top:122px" width="28" height="26" viewBox="0 0 28 26" fill="none" stroke="#8f8f94" stroke-width="1.9">
<path d="M5.8 1.8V6.1M5.8 11.3V24M13.4 1.8V14.9M13.4 20.1V24M21 1.8V6.1M21 11.3V24"/>
<rect x="2.6" y="6.3" width="6.4" height="4.8" rx="1.2"/><rect x="10.2" y="15.1" width="6.4" height="4.8" rx="1.2"/><rect x="17.8" y="6.3" width="6.4" height="4.8" rx="1.2"/></svg>
<svg style="position:absolute;left:20px;top:183px" width="32" height="28" viewBox="0 0 32 28"><path d="M8.3 3.4H22.9L28.4 14L22.9 24.6H8.3L2.8 14Z" fill="none" stroke="#fff" stroke-width="2.8" stroke-linejoin="round"/><text x="15.7" y="18.3" text-anchor="middle" font-size="11.8" font-weight="bold" fill="#fff" font-family='"Liberation Sans", sans-serif'>1F</text></svg>
<svg style="position:absolute;left:21px;top:245px" width="30" height="30" viewBox="0 0 30 30"><g transform="rotate(-34 15 14.5)" fill="none" stroke="#5c5c61" stroke-width="1.6"><rect x="3.3" y="10.9" width="23.4" height="7.2"/><path d="M6.5 11v3M10 11v3M13.5 11v3M17 11v3M20.5 11v3M24 11v3" stroke-width="1.1"/></g></svg>
<svg style="position:absolute;left:22px;top:307px" width="28" height="27" viewBox="0 0 28 27" fill="none" stroke="#707075" stroke-width="1.6"><rect x="2.2" y="2.6" width="9" height="9"/><path d="M15.2 6.8H24.2V24.4H6.5V15.6H15.2ZM15.2 15.6V24.4M15.2 15.6H24.2"/></svg>
<svg style="position:absolute;left:24px;top:785px" width="24" height="20" viewBox="0 0 24 20"><path d="M2.4 2.2H21.6V13.8H6L2.4 17.4Z" fill="none" stroke="#7d7d82" stroke-width="1.6" stroke-linejoin="round"/><g fill="#7d7d82"><rect x="7" y="7" width="2.2" height="2.2"/><rect x="11" y="7" width="2.2" height="2.2"/><rect x="15" y="7" width="2.2" height="2.2"/></g></svg>
<div style="position:absolute;left:23.5px;top:834.3px;width:23.5px;height:2px;background:#8a8a8f"></div>
<div style="position:absolute;left:23.5px;top:839.9px;width:23.5px;height:2px;background:#8a8a8f"></div>
<div style="position:absolute;left:23.5px;top:845.5px;width:23.5px;height:2px;background:#8a8a8f"></div>
</div>

<div id="bottom">
<div style="position:absolute;left:121.3px;top:0;width:144px;height:3px;background:#5a3fb4"></div>
<span class="tab" id="t1" style="left:15.3px;color:#7c7c82;-webkit-text-stroke:0.3px;letter-spacing:-0.019px">Session 0</span>
<svg style="position:absolute;left:95.5px;top:19.5px" width="9" height="9" viewBox="0 0 9 9"><path d="M1 1L8 8M8 1L1 8" stroke="#636368" stroke-width="1.3"/></svg>
<div style="position:absolute;left:118.6px;top:12px;width:1.2px;height:22.5px;background:#333336"></div>
<span class="tab" id="t2" style="left:135.5px;color:#fff;-webkit-text-stroke:0.45px;letter-spacing:0.064px">analyzer_fest</span>
<svg style="position:absolute;left:241.5px;top:19.5px" width="9" height="9" viewBox="0 0 9 9"><path d="M1 1L8 8M8 1L1 8" stroke="#636368" stroke-width="1.3"/></svg>
<div style="position:absolute;left:264.8px;top:12px;width:1.2px;height:22.5px;background:#333336"></div>
<svg style="position:absolute;left:278.5px;top:17.5px" width="13" height="13" viewBox="0 0 13 13"><path d="M6.5 0.5V12.5M0.5 6.5H12.5" stroke="#a0a0a4" stroke-width="1.7"/></svg>
<span class="tab" id="zoomlbl" style="left:1354.3px;top:14.5px;font-size:15px;color:#d0d0d0">2 µs</span>
<svg style="position:absolute;left:1386.5px;top:22.3px" width="10" height="6" viewBox="0 0 10 6"><path d="M1 5L5 1.2L9 5" fill="none" stroke="#d0d0d0" stroke-width="1.7"/></svg>
</div>
</body></html>
